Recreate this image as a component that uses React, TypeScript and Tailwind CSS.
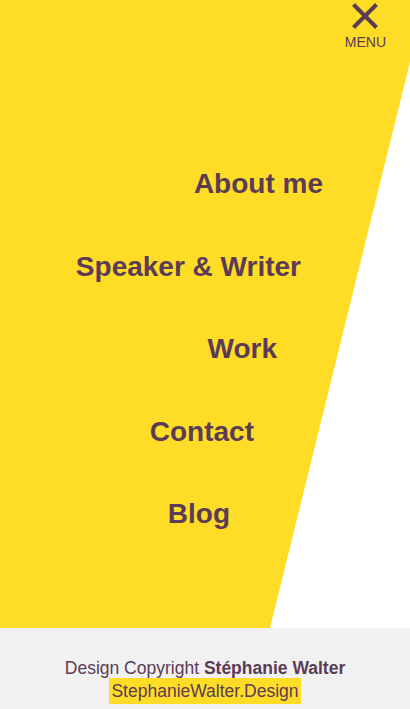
import React from "react";

const links = [
  { label: "About me", mr: "mr-[87px]" },
  { label: "Speaker & Writer", mr: "mr-[109px]" },
  { label: "Work", mr: "mr-[133px]" },
  { label: "Contact", mr: "mr-[156px]" },
  { label: "Blog", mr: "mr-[180px]" },
];

export default function App() {
  return (
    <div className="min-h-screen bg-white font-['Liberation_Sans',Arial,sans-serif] text-[#5b3b55]">
      {/* yellow slanted menu panel */}
      <section className="h-[628px] bg-[#ffdd27] [clip-path:polygon(0_0,100%_0,100%_62px,270px_100%,0_100%)]">
        <header className="flex justify-end pr-[24px]">
          <button className="flex flex-col items-center text-[#5b3b55]">
            <svg width="28" height="28" viewBox="0 0 28 28" className="mt-[1.5px] mb-[4.5px]">
              <path d="M2.5 2.5 L25.5 25.5 M25.5 2.5 L2.5 25.5" stroke="currentColor" strokeWidth="4" />
            </svg>
            <span className="text-[14px] leading-4">MENU</span>
          </button>
        </header>

        <nav className="mt-[93px]">
          <ul className="flex flex-col items-end">
            {links.map((l) => (
              <li key={l.label} className={l.mr}>
                <a href="#" className="block text-[28px] font-bold leading-[82.5px]">
                  {l.label}
                </a>
              </li>
            ))}
          </ul>
        </nav>
      </section>

      <footer className="bg-[#f1f1f1] pt-[29px] pb-[8px] text-center text-[17.5px] leading-[23.3px]">
        <p>
          Design Copyright <strong className="font-bold">Stéphanie Walter</strong>
        </p>
        <p>
          <a href="#" className="bg-[#ffdd27] px-[2px] py-[3px]">
            StephanieWalter.Design
          </a>
        </p>
      </footer>
    </div>
  );
}
